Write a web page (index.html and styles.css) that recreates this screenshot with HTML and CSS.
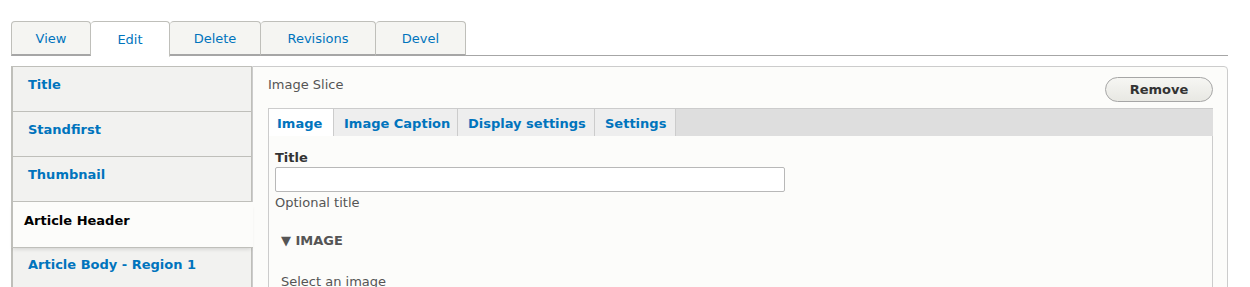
FILE: index.html
```html
<!DOCTYPE html>
<html>
<head>
<meta charset="utf-8">
<link rel="stylesheet" href="styles.css">
</head>
<body>
<div class="page">
  <ul class="primary-tabs">
    <li class="ptab"><a href="#">View</a></li>
    <li class="ptab active"><a href="#">Edit</a></li>
    <li class="ptab"><a href="#">Delete</a></li>
    <li class="ptab"><a href="#">Revisions</a></li>
    <li class="ptab"><a href="#">Devel</a></li>
  </ul>
  <div class="vtabs">
    <ul class="vtab-list">
      <li class="vtab"><a href="#">Title</a></li>
      <li class="vtab"><a href="#">Standfirst</a></li>
      <li class="vtab"><a href="#">Thumbnail</a></li>
      <li class="vtab selected"><a href="#">Article Header</a></li>
      <li class="vtab"><a href="#">Article Body - Region 1</a></li>
    </ul>
    <div class="vpane">
      <div class="slice-head">
        <span class="slice-label">Image Slice</span>
        <button class="btn-remove">Remove</button>
      </div>
      <div class="htabs">
        <ul class="htab-list">
          <li class="htab active"><a href="#">Image</a></li>
          <li class="htab"><a href="#">Image Caption</a></li>
          <li class="htab"><a href="#">Display settings</a></li>
          <li class="htab"><a href="#">Settings</a></li>
        </ul>
        <div class="htab-body">
          <label class="field-label">Title</label>
          <input class="text-input" type="text">
          <div class="description">Optional title</div>
          <div class="fieldset">
            <div class="legend">&#9660; IMAGE</div>
            <div class="select-text">Select an image</div>
          </div>
        </div>
      </div>
    </div>
  </div>
</div>
</body>
</html>
```

FILE: styles.css
```css
* { box-sizing: border-box; }
html, body { margin: 0; padding: 0; background: #fff; }
body {
  font-family: "DejaVu Sans", "Noto Sans", sans-serif;
  font-size: 13px;
  color: #333;
  overflow: hidden;
}
a { text-decoration: none; }
ul { list-style: none; margin: 0; padding: 0; }

.page { padding: 21px 22px 0 11px; }

/* primary tabs */
.primary-tabs {
  display: flex;
  border-bottom: 1px solid #a6a6a6;
  height: 35px;
}
.ptab {
  height: 35px;
  background: #f5f5f2;
  border: 1px solid #bfbfba;
  border-bottom: 2px solid #a6a6a6;
  border-left: none;
  border-radius: 4px 4px 0 0;
  display: flex;
  align-items: center;
  justify-content: center;
}
.ptab:nth-child(1) { width: 80px; border-left: 1px solid #bfbfba; }
.ptab:nth-child(2) { width: 79px; }
.ptab:nth-child(3) { width: 91px; }
.ptab:nth-child(4) { width: 115px; }
.ptab:nth-child(5) { width: 90px; }
.ptab a {
  color: #0074bd;
  line-height: 33px;
}
.ptab.active {
  background: #fff;
  border-bottom: 1px solid #fff;
  height: 36px;
  position: relative;
  z-index: 1;
}

/* vertical tabs */
.vtabs {
  display: flex;
  margin-top: 10px;
}
.vtab-list {
  width: 241px;
  flex: none;
}
.vtab {
  height: 45px;
  background: #f2f2f0;
  border: 1px solid #bfbfba;
  border-top: none;
  border-left: 2px solid #bfbfba;
  padding: 10px 16px 0 15px;
}
.vtab:first-child { border-top: 1px solid #bfbfba; height: 46px; }
.vtab a {
  color: #0074bd;
  font-weight: bold;
}
.vtab.selected {
  height: 46px;
  padding-top: 11px;
  background: #fcfcfa;
  border-right: none;
  padding-left: 11px;
  margin-right: -1px;
  position: relative;
  z-index: 1;
  box-shadow: 0 3px 4px -2px rgba(0,0,0,0.15);
}
.vtab.selected a { color: #000; }
.vtab.selected + .vtab { padding-top: 9px; }

.vpane {
  flex: 1;
  background: #fcfcfa;
  border: 1px solid #ccc;
  border-radius: 0 4px 0 0;
  padding: 9px 14px 0 15px;
  height: 230px;
}
.slice-head {
  display: flex;
  justify-content: space-between;
  align-items: flex-start;
  height: 32px;
}
.slice-label { color: #555; line-height: 18px; }
.btn-remove {
  margin-top: 1px;
  font-family: inherit;
  font-size: 13px;
  font-weight: bold;
  color: #333;
  height: 25px;
  width: 108px;
  background: linear-gradient(to bottom, #f6f6f3, #e8e8e3);
  border: 1px solid #a6a6a6;
  border-radius: 20em;
  padding: 0;
}

.htab-list {
  display: flex;
  background: #dedede;
  border-top: 1px solid #ccc;
  height: 28px;
}
.htab {
  background: #eee;
  border-right: 1px solid #ccc;
  height: 27px;
  display: flex;
  align-items: center;
  padding: 1px 0 0 10px;
}
.htab:nth-child(1) { width: 66px; }
.htab:nth-child(2) { width: 124px; }
.htab:nth-child(3) { width: 137px; }
.htab:nth-child(4) { width: 81px; }
.htab a { color: #0074bd; font-weight: bold; white-space: nowrap; }
.htab.active { background: #fff; border-left: 1px solid #ccc; padding-left: 8px; }
.htab-body {
  border-left: 1px solid #ccc;
  border-right: 1px solid #ccc;
  background: #fcfcfa;
  padding: 14px 6px 0 6px;
  height: 160px;
}
.field-label {
  display: block;
  font-weight: bold;
  color: #333;
  line-height: 16px;
}
.text-input {
  display: block;
  width: 510px;
  height: 25px;
  border: 1px solid #b8b8b8;
  border-radius: 2px;
  background: #fff;
  margin-top: 1px;
}
.description {
  color: #555;
  margin-top: 3px;
  line-height: 16px;
}
.fieldset { padding: 22px 6px 0 6px; }
.legend {
  font-weight: bold;
  color: #555;
  line-height: 16px;
}
.select-text {
  color: #555;
  margin-top: 25px;
  line-height: 16px;
}
```
